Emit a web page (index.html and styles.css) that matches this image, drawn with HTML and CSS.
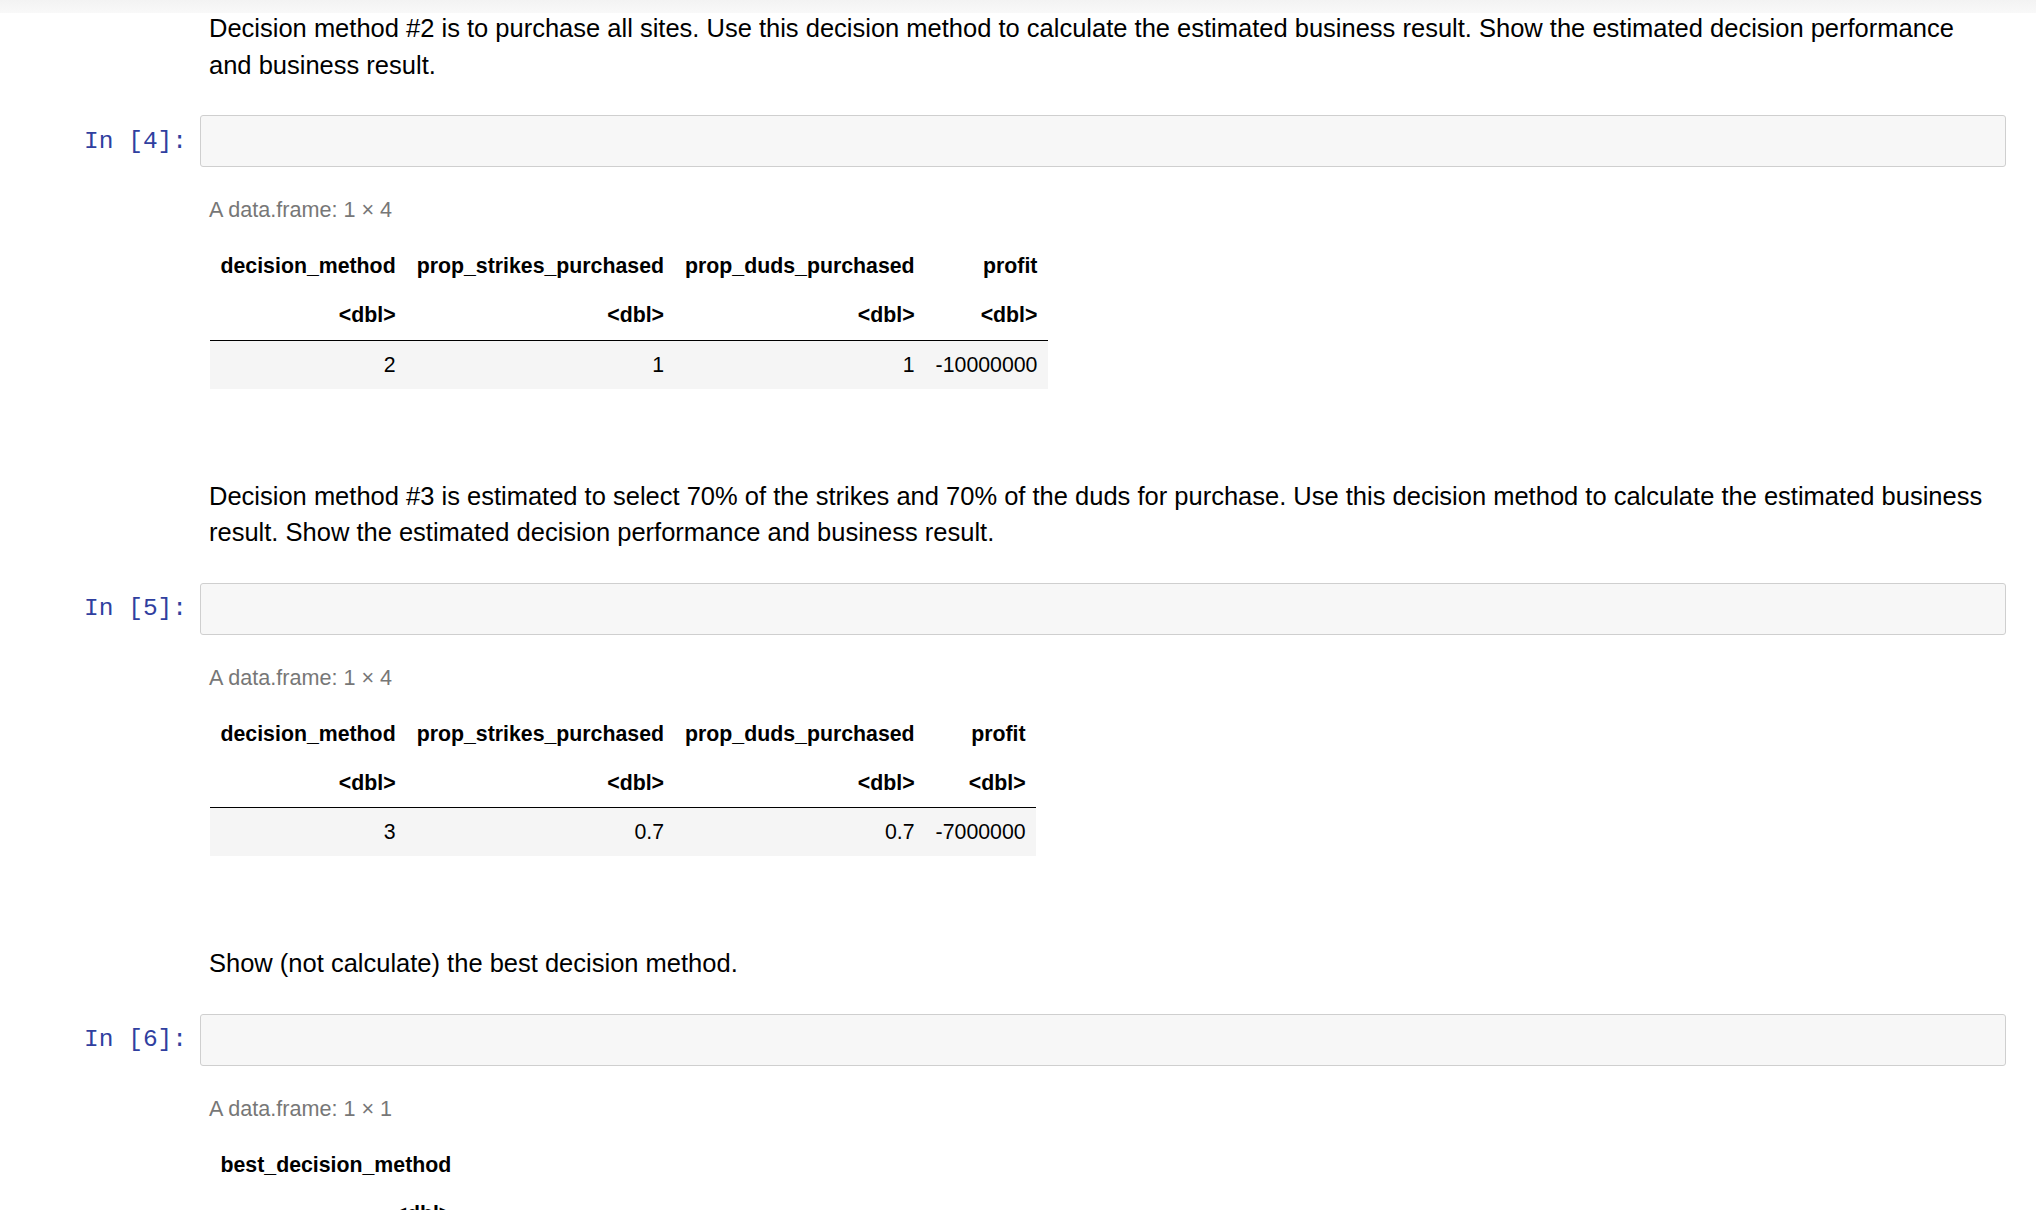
FILE: index.html
```html
<!DOCTYPE html>
<html lang="en">
<head>
<meta charset="utf-8">
<title>Notebook</title>
<link rel="stylesheet" href="styles.css">
</head>
<body>
<div class="header-shadow"></div>
<main class="notebook">

  <section class="cell text-cell first">
    <div class="prompt"></div>
    <div class="md">
      <p>Decision method #2 is to purchase all sites. Use this decision method to calculate the estimated business result. Show the estimated decision performance and business result.</p>
    </div>
  </section>

  <section class="code-cell">
    <div class="cell input">
      <div class="prompt">In&nbsp;[4]:</div>
      <div class="code-box"></div>
    </div>
    <div class="cell output">
      <div class="prompt"></div>
      <div class="out">
        <div class="caption">A data.frame: 1 × 4</div>
        <table class="df">
          <thead>
            <tr><th>decision_method</th><th>prop_strikes_purchased</th><th>prop_duds_purchased</th><th>profit</th></tr>
            <tr class="types"><th>&lt;dbl&gt;</th><th>&lt;dbl&gt;</th><th>&lt;dbl&gt;</th><th>&lt;dbl&gt;</th></tr>
          </thead>
          <tbody>
            <tr><td>2</td><td>1</td><td>1</td><td>-10000000</td></tr>
          </tbody>
        </table>
      </div>
    </div>
  </section>

  <section class="cell text-cell">
    <div class="prompt"></div>
    <div class="md">
      <p>Decision method #3 is estimated to select 70% of the strikes and 70% of the duds for purchase. Use this decision method to calculate the estimated business result. Show the estimated decision performance and business result.</p>
    </div>
  </section>

  <section class="code-cell">
    <div class="cell input">
      <div class="prompt">In&nbsp;[5]:</div>
      <div class="code-box"></div>
    </div>
    <div class="cell output">
      <div class="prompt"></div>
      <div class="out">
        <div class="caption">A data.frame: 1 × 4</div>
        <table class="df">
          <thead>
            <tr><th>decision_method</th><th>prop_strikes_purchased</th><th>prop_duds_purchased</th><th>profit</th></tr>
            <tr class="types"><th>&lt;dbl&gt;</th><th>&lt;dbl&gt;</th><th>&lt;dbl&gt;</th><th>&lt;dbl&gt;</th></tr>
          </thead>
          <tbody>
            <tr><td>3</td><td>0.7</td><td>0.7</td><td>-7000000</td></tr>
          </tbody>
        </table>
      </div>
    </div>
  </section>

  <section class="cell text-cell">
    <div class="prompt"></div>
    <div class="md">
      <p>Show (not calculate) the best decision method.</p>
    </div>
  </section>

  <section class="code-cell">
    <div class="cell input">
      <div class="prompt">In&nbsp;[6]:</div>
      <div class="code-box"></div>
    </div>
    <div class="cell output">
      <div class="prompt"></div>
      <div class="out">
        <div class="caption">A data.frame: 1 × 1</div>
        <table class="df">
          <thead>
            <tr><th>best_decision_method</th></tr>
            <tr class="types"><th>&lt;dbl&gt;</th></tr>
          </thead>
          <tbody>
            <tr><td>3</td></tr>
          </tbody>
        </table>
      </div>
    </div>
  </section>

</main>
</body>
</html>
```

FILE: styles.css
```css
html, body {
  margin: 0;
  padding: 0;
  background: #ffffff;
}

body {
  font-family: "Liberation Sans", Arial, Helvetica, sans-serif;
  color: #000000;
  height: 1210px;
  overflow: hidden;
}

.header-shadow {
  position: fixed;
  top: 0;
  left: 0;
  right: 0;
  height: 13px;
  background: linear-gradient(#f3f3f3, #f9f9f9);
  z-index: 2;
}

.notebook {
  padding: 10px 30px 0 0;
}

.cell {
  display: flex;
}

.prompt {
  flex: none;
  width: 200px;
  box-sizing: border-box;
  padding-right: 13px;
  font-family: "Liberation Mono", "Courier New", monospace;
  font-size: 24.5px;
  color: #303f9f;
  display: flex;
  align-items: center;
  justify-content: flex-end;
}

.text-cell {
  margin-top: 89px;
}

.text-cell.first {
  margin-top: 0;
}

.md {
  flex: 1;
  min-width: 0;
  padding: 0 9px;
  font-size: 25.5px;
  line-height: 36.5px;
}

.md p {
  margin: 0;
}

.input {
  margin-top: 32px;
}

.code-box {
  flex: 1;
  height: 50px;
  border: 1px solid #cfcfcf;
  border-radius: 3px;
  background: #f7f7f7;
}

.output {
  margin-top: 28px;
}

.out {
  flex: 1;
  min-width: 0;
  padding-left: 10px;
}

.caption {
  font-size: 21.6px;
  line-height: 30px;
  color: #777777;
  margin-left: -1px;
}

.df {
  margin-top: 16.5px;
  border-collapse: collapse;
  border-spacing: 0;
  font-size: 21.3px;
}

.df th,
.df td {
  padding: 0 10.5px;
  text-align: right;
  white-space: nowrap;
}

.df th {
  font-weight: bold;
  padding-top: 1.5px;
  line-height: 47.5px;
}

.df td {
  line-height: 48px;
}

.df thead tr.types th {
  border-bottom: 1px solid #000000;
}

.df tbody tr:nth-child(odd) {
  background: #f5f5f5;
}
```
